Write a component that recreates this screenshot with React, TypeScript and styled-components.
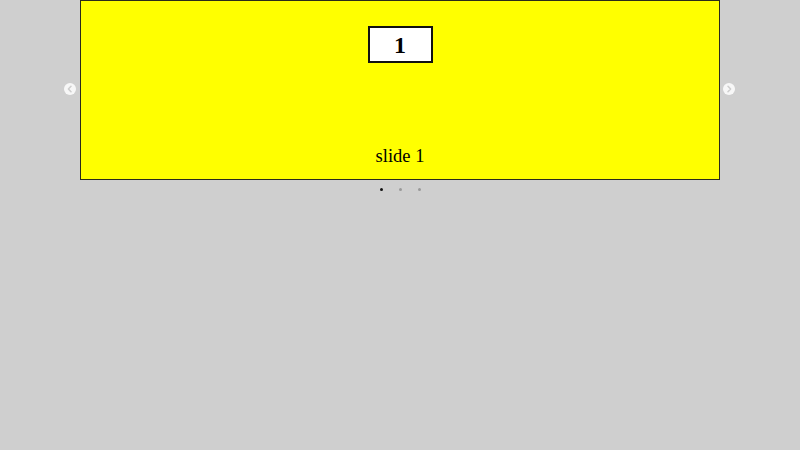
import styled, { createGlobalStyle } from "styled-components";

const Global = createGlobalStyle`
  html, body { margin: 0; padding: 0; background: #cfcfcf; }
  body { font-family: "Liberation Serif", "Times New Roman", serif; }
`;

const Page = styled.div`
  padding: 0 80px;
`;

const Carousel = styled.div`
  position: relative;
`;

const Slide = styled.div`
  box-sizing: border-box;
  height: 180px;
  border: 1px solid #2b2b1a;
  background: #ffff00;
  display: flex;
  flex-direction: column;
  align-items: center;
  padding: 25px 0 11px;
`;

const NumberBox = styled.div`
  box-sizing: border-box;
  width: 65px;
  height: 37px;
  padding-top: 2px;
  border: 2px solid #111;
  background: #fff;
  display: flex;
  align-items: center;
  justify-content: center;
  font-size: 24px;
  font-weight: bold;
`;

const Caption = styled.div`
  margin-top: auto;
  font-size: 18.5px;
  line-height: 23px;
`;

const Arrow = styled.button<{ $side: "left" | "right" }>`
  position: absolute;
  top: 83px;
  ${(p) => (p.$side === "left" ? "left: -16px;" : "right: -15px;")}
  width: 12px;
  height: 12px;
  padding: 0;
  border: 0;
  background: none;
  opacity: 0.85;
  display: block;
`;

const Dots = styled.ul`
  list-style: none;
  margin: 0;
  padding: 8px 0 0;
  display: flex;
  justify-content: center;
  gap: 16px;
`;

const Dot = styled.li<{ $active?: boolean }>`
  width: 3px;
  height: 3px;
  border-radius: 50%;
  background: ${(p) => (p.$active ? "#111" : "#999")};
`;

const ArrowIcon = ({ dir }: { dir: "left" | "right" }) => (
  <svg width="12" height="12" viewBox="0 0 12 12">
    <circle cx="6" cy="6" r="6" fill="#fff" />
    <path
      d={dir === "left" ? "M7 3.3 L4.4 6 L7 8.7" : "M5 3.3 L7.6 6 L5 8.7"}
      fill="none"
      stroke="#cfcfcf"
      strokeWidth="1.6"
      strokeLinecap="round"
      strokeLinejoin="round"
    />
  </svg>
);

export default function App() {
  return (
    <Page>
      <Global />
      <Carousel>
        <Arrow $side="left" aria-label="Previous">
          <ArrowIcon dir="left" />
        </Arrow>
        <Slide>
          <NumberBox>1</NumberBox>
          <Caption>slide 1</Caption>
        </Slide>
        <Arrow $side="right" aria-label="Next">
          <ArrowIcon dir="right" />
        </Arrow>
      </Carousel>
      <Dots>
        {[0, 1, 2].map((i) => (
          <Dot key={i} $active={i === 0} />
        ))}
      </Dots>
    </Page>
  );
}
